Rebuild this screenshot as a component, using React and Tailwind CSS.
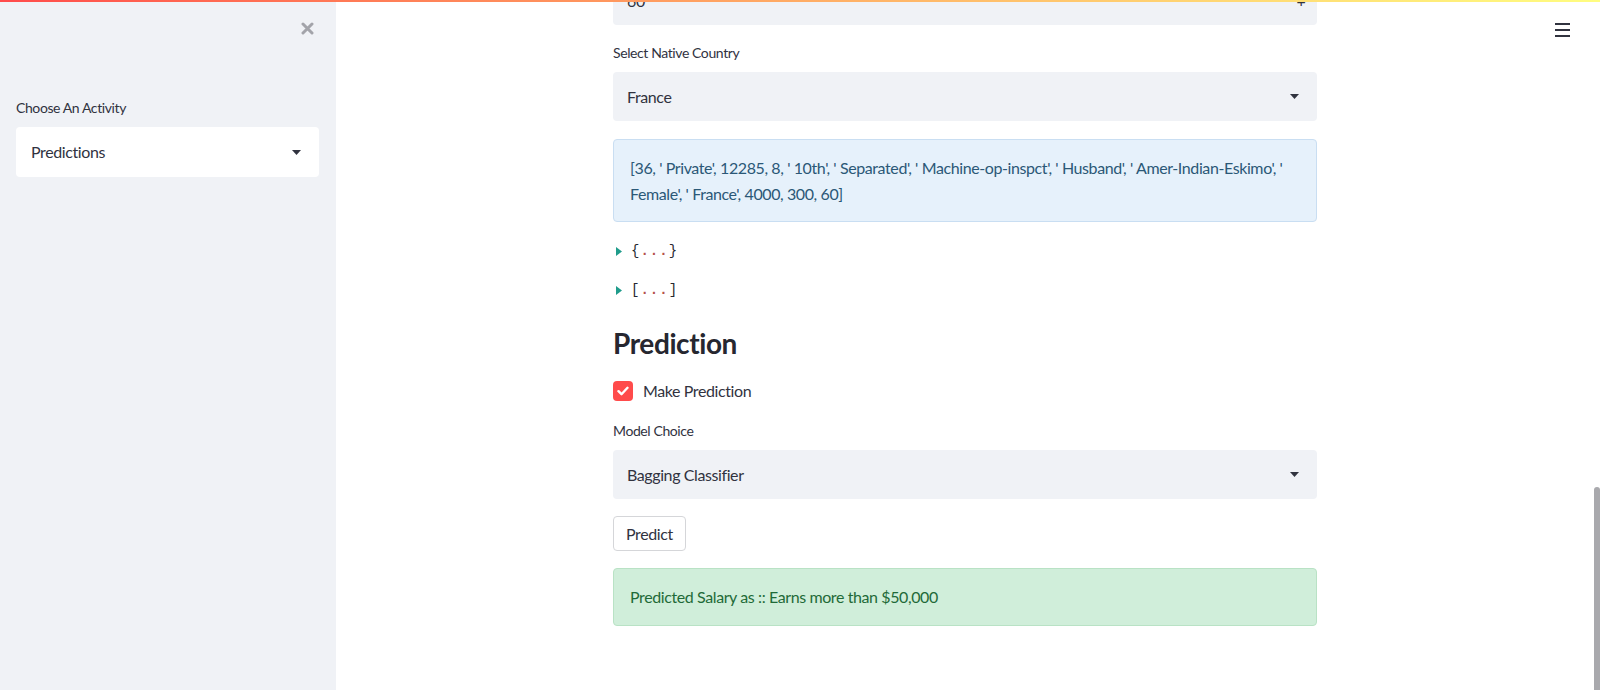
import React, { useState } from "react";

const font = { fontFamily: "Lato, 'Liberation Sans', sans-serif", letterSpacing: "-0.4px" };

const Caret = () => (
  <svg width="9" height="5" viewBox="0 0 9 5" className="shrink-0">
    <path d="M0 0h9L4.5 5z" fill="#31333f" />
  </svg>
);

const SelectBox = ({ value, white }) => (
  <div
    className={`flex h-[49px] items-center justify-between rounded-[4px] pl-[14px] pr-[18px] text-[16px] text-[#31333f] ${
      white ? "bg-white" : "bg-[#f0f2f6]"
    }`}
  >
    <span>{value}</span>
    <Caret />
  </div>
);

const Label = ({ children, className = "" }) => (
  <div className={`h-[22px] text-[14px] leading-[22px] text-[#31333f] ${className}`}>
    {children}
  </div>
);

const JsonRow = ({ open, close, className = "" }) => (
  <div className={`flex h-[22px] items-center gap-[9px] pl-[3px] ${className}`}>
    <svg width="6" height="9" viewBox="0 0 6 9">
      <path d="M0 0l6 4.5L0 9z" fill="#1f9c8b" />
    </svg>
    <span
      className="text-[14px] text-[#262730]"
      style={{ fontFamily: "'Liberation Mono', monospace", letterSpacing: "1px" }}
    >
      {open}
      <span className="font-bold text-[#b5514a]">...</span>
      {close}
    </span>
  </div>
);

export default function App() {
  const [checked, setChecked] = useState(true);

  return (
    <div className="relative flex h-[690px] w-[1600px] overflow-hidden bg-white" style={font}>
      {/* top decoration */}
      <div className="absolute left-0 right-0 top-0 z-20 h-[2px] bg-gradient-to-r from-[#ff4b4b] to-[#fffd80]" />

      {/* sidebar */}
      <aside className="flex w-[336px] shrink-0 flex-col bg-[#f0f2f6] px-4">
        <div className="flex justify-end pr-[6px] pt-[22px]">
          <svg width="13" height="13" viewBox="0 0 13 13">
            <path d="M2 2l9 9M11 2l-9 9" stroke="#a3a4aa" strokeWidth="3" strokeLinecap="round" />
          </svg>
        </div>
        <Label className="mt-[62px]">Choose An Activity</Label>
        <div className="mt-[8px] w-[303px]">
          <div className="flex h-[50px] items-center justify-between rounded-[4px] bg-white pl-[15px] pr-[18px] text-[16px] text-[#31333f]">
            <span>Predictions</span>
            <Caret />
          </div>
        </div>
      </aside>

      {/* main */}
      <main className="flex-1 pr-[6px]">
        <div className="mx-auto w-[704px]">
          {/* number input cut by scroll */}
          <div className="mt-[-23px] flex h-[48px] items-center rounded-[4px] bg-[#f0f2f6] text-[16px] text-[#31333f]">
            <span className="flex-1 pl-[14px]">60</span>
            <span className="w-[32px] text-center">+</span>
          </div>

          <Label className="mt-[17px]">Select Native Country</Label>
          <div className="mt-[8px]">
            <SelectBox value="France" />
          </div>

          <div className="mt-[18px] rounded-[4px] border border-[#c9def2] bg-[#e6f1fb] px-[16px] py-[15px] text-[16px] leading-[25.6px] text-[#2b5877]">
            <span className="whitespace-nowrap">
              {"[36, ' Private', 12285, 8, ' 10th', ' Separated', ' Machine-op-inspct', ' Husband', ' Amer-Indian-Eskimo', '"}
            </span>
            <br />
            {"Female', ' France', 4000, 300, 60]"}
          </div>

          <JsonRow open="{" close="}" className="mt-[18px]" />
          <JsonRow open="[" close="]" className="mt-[17px]" />

          <h3 className="mt-[25px] h-[34px] text-[28px] font-bold leading-[34px] text-[#262730]">Prediction</h3>

          <label
            className="mt-[21px] flex h-[20px] cursor-pointer items-center gap-[10px]"
            onClick={() => setChecked(!checked)}
          >
            <span
              className={`flex h-[20px] w-[20px] items-center justify-center rounded-[4px] ${
                checked ? "bg-[#ff4b4b]" : "border border-[#bbb]"
              }`}
            >
              {checked && (
                <svg width="12" height="10" viewBox="0 0 12 10">
                  <path
                    d="M1.5 5.2l3 3 6-6.4"
                    stroke="white"
                    strokeWidth="2.4"
                    fill="none"
                    strokeLinecap="round"
                    strokeLinejoin="round"
                  />
                </svg>
              )}
            </span>
            <span className="text-[16px] text-[#31333f]">Make Prediction</span>
          </label>

          <Label className="mt-[19px]">Model Choice</Label>
          <div className="mt-[8px]">
            <SelectBox value="Bagging Classifier" />
          </div>

          <button className="mt-[17px] h-[35px] rounded-[4px] border border-[#d5d6d9] bg-white px-[12px] text-[16px] text-[#31333f]">
            Predict
          </button>

          <div className="mt-[17px] rounded-[4px] border border-[#b9e2c5] bg-[#d0eeda] px-[16px] py-[15px] text-[16px] leading-[25.6px] text-[#1f6a38]">
            Predicted Salary as :: Earns more than $50,000
          </div>
        </div>
      </main>

      {/* hamburger */}
      <div className="absolute right-[30px] top-[23px] flex w-[15px] flex-col gap-[4px]">
        <span className="h-[2px] bg-[#31333f]" />
        <span className="h-[2px] bg-[#31333f]" />
        <span className="h-[2px] bg-[#31333f]" />
      </div>

      {/* scrollbar */}
      <div className="absolute right-0 top-[487px] h-[203px] w-[6px] rounded-t-[3px] bg-[#a9a9ad]" />
    </div>
  );
}
